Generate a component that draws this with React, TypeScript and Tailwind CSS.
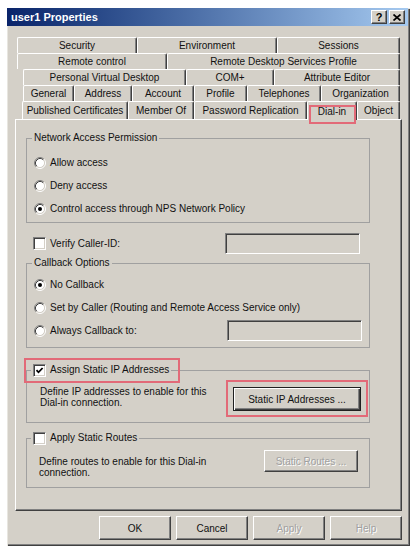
import React from 'react';
import clsx from 'clsx';

type Tab = { label: string; w: string; selected?: boolean };

const tabRows: { ml: string; h: string; tabs: Tab[] }[] = [
  {
    ml: 'ml-[10px]',
    h: 'h-[16px]',
    tabs: [
      { label: 'Security', w: 'w-[120px]' },
      { label: 'Environment', w: 'w-[140px]' },
      { label: 'Sessions', w: 'w-[123px]' },
    ],
  },
  {
    ml: 'ml-[10px]',
    h: 'h-[16px]',
    tabs: [
      { label: 'Remote control', w: 'w-[150px]' },
      { label: 'Remote Desktop Services Profile', w: 'w-[233px]' },
    ],
  },
  {
    ml: 'ml-[16px]',
    h: 'h-[16px]',
    tabs: [
      { label: 'Personal Virtual Desktop', w: 'w-[163px]' },
      { label: 'COM+', w: 'w-[88px]' },
      { label: 'Attribute Editor', w: 'w-[126px]' },
    ],
  },
  {
    ml: 'ml-[16px]',
    h: 'h-[16px]',
    tabs: [
      { label: 'General', w: 'w-[51px]' },
      { label: 'Address', w: 'w-[58px]' },
      { label: 'Account', w: 'w-[62px]' },
      { label: 'Profile', w: 'w-[53px]' },
      { label: 'Telephones', w: 'w-[74px]' },
      { label: 'Organization', w: 'w-[79px]' },
    ],
  },
  {
    ml: 'ml-[15px]',
    h: 'h-[18px]',
    tabs: [
      { label: 'Published Certificates', w: 'w-[106px]' },
      { label: 'Member Of', w: 'w-[66px]' },
      { label: 'Password Replication', w: 'w-[113px]' },
      { label: 'Dial-in', w: 'w-[50px]', selected: true },
      { label: 'Object', w: 'w-[43px]' },
    ],
  },
];

function TabItem({ label, w, selected }: Tab) {
  return (
    <div
      className={clsx(
        'relative flex items-center justify-center whitespace-nowrap rounded-t-[2px] border-t border-l border-r border-t-white border-l-white border-r-[#404040] bg-[#d4d0c8] shadow-[inset_-1px_0_0_#808080]',
        w,
        selected ? 'z-10 h-[19px]' : 'h-full'
      )}
    >
      {label}
      {selected && (
        <span className="pointer-events-none absolute left-[1px] right-0 top-[3px] -bottom-[4px] border-2 border-[#e26a78]" />
      )}
    </div>
  );
}

function Radio({ checked }: { checked?: boolean }) {
  return (
    <svg width="12" height="12" viewBox="0 0 12 12" className="shrink-0">
      <circle cx="6" cy="6" r="4.5" fill="#fff" />
      <path d="M2.11 9.89A5.5 5.5 0 0 1 9.89 2.11" fill="none" stroke="#808080" />
      <path d="M9.89 2.11A5.5 5.5 0 0 1 2.11 9.89" fill="none" stroke="#fff" />
      <path d="M2.82 9.18A4.5 4.5 0 0 1 9.18 2.82" fill="none" stroke="#404040" />
      <path d="M9.18 2.82A4.5 4.5 0 0 1 2.82 9.18" fill="none" stroke="#d4d0c8" />
      {checked && <circle cx="6" cy="6" r="2" fill="#000" />}
    </svg>
  );
}

function Check({ checked }: { checked?: boolean }) {
  return (
    <span className="flex h-[13px] w-[13px] shrink-0 items-center justify-center border border-t-[#808080] border-l-[#808080] border-r-white border-b-white bg-white shadow-[inset_1px_1px_0_#404040,inset_-1px_-1px_0_#d4d0c8]">
      {checked && (
        <svg width="9" height="9" viewBox="0 0 9 9">
          <path d="M1.5 4.2 3.5 6.3 7.6 2" fill="none" stroke="#000" strokeWidth="1.8" />
        </svg>
      )}
    </span>
  );
}

function Sunken() {
  return (
    <div className="h-[21px] w-[135px] border border-t-[#808080] border-l-[#808080] border-r-white border-b-white bg-[#d4d0c8] shadow-[inset_1px_1px_0_#404040,inset_-1px_-1px_0_#d4d0c8]" />
  );
}

function Button({
  children,
  className,
  disabled,
  isDefault,
}: {
  children: React.ReactNode;
  className: string;
  disabled?: boolean;
  isDefault?: boolean;
}) {
  return (
    <div
      className={clsx(
        'flex items-center justify-center whitespace-nowrap bg-[#d4d0c8]',
        isDefault
          ? 'border border-[#202020] shadow-[inset_1px_1px_0_#fff,inset_-1px_-1px_0_#404040,inset_-2px_-2px_0_#808080]'
          : 'border border-t-white border-l-white border-r-[#404040] border-b-[#404040] shadow-[inset_-1px_-1px_0_#808080]',
        disabled && 'text-[#a0a0a0] [text-shadow:1px_1px_0_#fff]',
        className
      )}
    >
      {children}
    </div>
  );
}

function Option({ label, checked }: { label: string; checked?: boolean }) {
  return (
    <div className="flex h-[23px] items-center gap-[4px]">
      <Radio checked={checked} />
      <span>{label}</span>
    </div>
  );
}

export default function App() {
  return (
    <div className="min-h-screen bg-white pl-[7px] pt-[8px]">
      <div className="flex h-[538px] w-[403px] flex-col bg-[#d4d0c8] font-['Liberation_Sans',Arial,sans-serif] text-[10px] text-[#111] shadow-[inset_1px_1px_0_#e8e6e0,inset_-1px_-1px_0_#404040,inset_-2px_-2px_0_#808080]">
        {/* title bar */}
        <div className="mr-[2px] flex h-[18px] items-center bg-linear-to-r from-[#0a246a] to-[#a6caf0] pl-[4px] pr-[3px]">
          <span className="text-[11px] font-bold text-white">user1 Properties</span>
          <div className="ml-auto flex gap-[2px]">
            <span className="flex h-[14px] w-[16px] items-center justify-center border border-t-white border-l-white border-r-[#404040] border-b-[#404040] bg-[#d4d0c8] text-[11px] font-bold leading-none text-black shadow-[inset_-1px_-1px_0_#808080]">
              ?
            </span>
            <span className="flex h-[14px] w-[16px] items-center justify-center border border-t-white border-l-white border-r-[#404040] border-b-[#404040] bg-[#d4d0c8] shadow-[inset_-1px_-1px_0_#808080]">
              <svg width="8" height="7" viewBox="0 0 8 7">
                <path d="M0.5 0.5 7.5 6.5M7.5 0.5 0.5 6.5" stroke="#000" strokeWidth="1.7" />
              </svg>
            </span>
          </div>
        </div>

        {/* tabs */}
        <div className="mt-[11px] flex flex-col">
          {tabRows.map((row, i) => (
            <div key={i} className={clsx('flex', row.ml, row.h)}>
              {row.tabs.map((t) => (
                <TabItem key={t.label} {...t} />
              ))}
            </div>
          ))}
        </div>

        {/* panel */}
        <div className="ml-[8px] flex h-[392px] w-[387px] flex-col border border-t-white border-l-white border-r-[#404040] border-b-[#404040] shadow-[inset_-1px_-1px_0_#808080]">
          <fieldset className="ml-[10px] mt-[12px] w-[344px] border border-[#a0a0a0]">
            <legend className="ml-[5px] px-[2px] leading-[12px]">Network Access Permission</legend>
            <div className="flex flex-col pl-[7px] pt-[7px] pb-[2px]">
              <Option label="Allow access" />
              <Option label="Deny access" />
              <Option label="Control access through NPS Network Policy" checked />
            </div>
          </fieldset>

          <div className="ml-[17px] mt-[10px] flex h-[21px] items-center">
            <div className="flex w-[192px] items-center gap-[4px]">
              <Check />
              <span>Verify Caller-ID:</span>
            </div>
            <Sunken />
          </div>

          <fieldset className="ml-[10px] mt-[3px] w-[344px] border border-[#a0a0a0]">
            <legend className="ml-[5px] px-[2px] leading-[12px]">Callback Options</legend>
            <div className="flex flex-col pl-[7px] pt-[4px] pb-[5px]">
              <Option label="No Callback" checked />
              <Option label="Set by Caller (Routing and Remote Access Service only)" />
              <div className="flex h-[23px] items-center">
                <div className="flex w-[193px] items-center gap-[4px]">
                  <Radio />
                  <span>Always Callback to:</span>
                </div>
                <Sunken />
              </div>
            </div>
          </fieldset>

          <fieldset className="ml-[10px] mt-[15px] w-[344px] border border-[#a0a0a0]">
            <legend className="relative ml-[4px] px-[2px] leading-[14px]">
              <span className="flex items-center gap-[4px]">
                <Check checked />
                <span>Assign Static IP Addresses</span>
              </span>
              <span className="pointer-events-none absolute -left-[7px] -right-[9px] -top-[5px] -bottom-[6px] border-2 border-[#e26a78]" />
            </legend>
            <div className="flex items-start pl-[13px] pt-[9px] pb-[11px]">
              <p className="w-[193px] leading-[11px]">
                Define IP addresses to enable for this
                <br />
                Dial-in connection.
              </p>
              <div className="relative mt-[1px]">
                <Button isDefault className="h-[24px] w-[128px]">
                  Static IP Addresses ...
                </Button>
                <span className="pointer-events-none absolute -left-[7px] -right-[7px] -top-[7px] -bottom-[6px] border-2 border-[#e26a78]" />
              </div>
            </div>
          </fieldset>

          <fieldset className="ml-[10px] mt-[8px] w-[344px] border border-[#a0a0a0]">
            <legend className="ml-[4px] px-[2px] leading-[14px]">
              <span className="flex items-center gap-[4px]">
                <Check />
                <span>Apply Static Routes</span>
              </span>
            </legend>
            <div className="flex items-start pl-[12px] pt-[5px] pb-[9px]">
              <p className="mt-[6px] w-[225px] leading-[11px]">
                Define routes to enable for this Dial-in
                <br />
                connection.
              </p>
              <Button disabled className="h-[22px] w-[94px]">
                Static Routes ...
              </Button>
            </div>
          </fieldset>
        </div>

        {/* dialog buttons */}
        <div className="mt-[5px] flex justify-end gap-[5px] pr-[8px]">
          <Button className="h-[24px] w-[72px]">OK</Button>
          <Button className="h-[24px] w-[72px]">Cancel</Button>
          <Button disabled className="h-[24px] w-[72px]">
            Apply
          </Button>
          <Button disabled className="h-[24px] w-[72px]">
            Help
          </Button>
        </div>
      </div>
    </div>
  );
}
